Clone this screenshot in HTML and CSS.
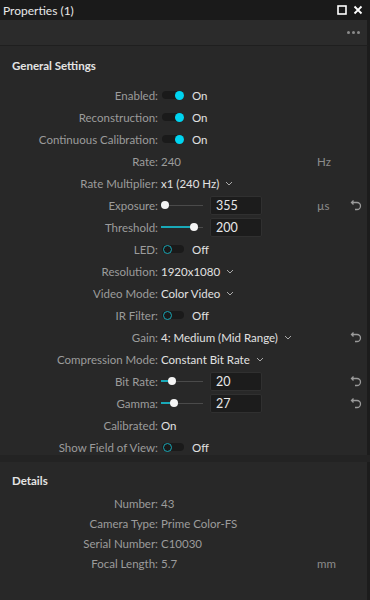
FILE: index.html
```html
<!DOCTYPE html>
<html>
<head>
<meta charset="utf-8">
<link rel="stylesheet" href="styles.css">
</head>
<body>
<div class="panel">
  <div class="titlebar">
    <span class="title">Properties (1)</span>
    <span class="win-icons">
      <svg width="10" height="10" viewBox="0 0 10 10"><rect x="1" y="1" width="8" height="8" fill="none" stroke="#fff" stroke-width="1.6"/></svg>
      <svg width="10" height="10" viewBox="0 0 10 10"><path d="M1.5 1.5L8.5 8.5M8.5 1.5L1.5 8.5" stroke="#fff" stroke-width="1.8"/></svg>
    </span>
  </div>
  <div class="toolbar">
    <span class="dots"><i></i><i></i><i></i></span>
  </div>

  <section class="section general">
    <h2>General Settings</h2>
    <div class="rows">
      <div class="row"><span class="lbl">Enabled:</span><span class="val"><span class="tog on"><b></b></span><span class="tv">On</span></span></div>
      <div class="row"><span class="lbl">Reconstruction:</span><span class="val"><span class="tog on"><b></b></span><span class="tv">On</span></span></div>
      <div class="row"><span class="lbl">Continuous Calibration:</span><span class="val"><span class="tog on"><b></b></span><span class="tv">On</span></span></div>
      <div class="row"><span class="lbl">Rate:</span><span class="val dim">240</span><span class="unit">Hz</span></div>
      <div class="row"><span class="lbl">Rate Multiplier:</span><span class="val">x1 (240 Hz)<svg class="chev" viewBox="0 0 8 5"><path d="M1 1l3 3 3-3" fill="none" stroke="#aaa" stroke-width="1"/></svg></span></div>
      <div class="row"><span class="lbl">Exposure:</span><span class="val"><span class="slider"><span class="fill" style="width:2px"></span><b style="left:0px"></b></span><span class="inp">355</span></span><span class="unit">µs</span><svg class="undo" viewBox="0 0 12 12"><path d="M3.5 1.5L1.5 3.5L3.5 5.5M1.5 3.5H7a3.5 3.5 0 0 1 0 7H5" fill="none" stroke="#9a9a9a" stroke-width="1.3"/></svg></div>
      <div class="row"><span class="lbl">Threshold:</span><span class="val"><span class="slider"><span class="fill" style="width:33px"></span><b style="left:29px"></b></span><span class="inp">200</span></span></div>
      <div class="row"><span class="lbl">LED:</span><span class="val"><span class="tog off"><b></b></span><span class="tv">Off</span></span></div>
      <div class="row"><span class="lbl">Resolution:</span><span class="val">1920x1080<svg class="chev" viewBox="0 0 8 5"><path d="M1 1l3 3 3-3" fill="none" stroke="#aaa" stroke-width="1"/></svg></span></div>
      <div class="row"><span class="lbl">Video Mode:</span><span class="val">Color Video<svg class="chev" viewBox="0 0 8 5"><path d="M1 1l3 3 3-3" fill="none" stroke="#aaa" stroke-width="1"/></svg></span></div>
      <div class="row"><span class="lbl">IR Filter:</span><span class="val"><span class="tog off"><b></b></span><span class="tv">Off</span></span></div>
      <div class="row"><span class="lbl">Gain:</span><span class="val">4: Medium (Mid Range)<svg class="chev" viewBox="0 0 8 5"><path d="M1 1l3 3 3-3" fill="none" stroke="#aaa" stroke-width="1"/></svg></span><span class="unit"></span><svg class="undo" viewBox="0 0 12 12"><path d="M3.5 1.5L1.5 3.5L3.5 5.5M1.5 3.5H7a3.5 3.5 0 0 1 0 7H5" fill="none" stroke="#9a9a9a" stroke-width="1.3"/></svg></div>
      <div class="row"><span class="lbl">Compression Mode:</span><span class="val">Constant Bit Rate<svg class="chev" viewBox="0 0 8 5"><path d="M1 1l3 3 3-3" fill="none" stroke="#aaa" stroke-width="1"/></svg></span></div>
      <div class="row"><span class="lbl">Bit Rate:</span><span class="val"><span class="slider"><span class="fill" style="width:9px"></span><b style="left:7px"></b></span><span class="inp">20</span></span><span class="unit"></span><svg class="undo" viewBox="0 0 12 12"><path d="M3.5 1.5L1.5 3.5L3.5 5.5M1.5 3.5H7a3.5 3.5 0 0 1 0 7H5" fill="none" stroke="#9a9a9a" stroke-width="1.3"/></svg></div>
      <div class="row"><span class="lbl">Gamma:</span><span class="val"><span class="slider"><span class="fill" style="width:11px"></span><b style="left:9px"></b></span><span class="inp">27</span></span><span class="unit"></span><svg class="undo" viewBox="0 0 12 12"><path d="M3.5 1.5L1.5 3.5L3.5 5.5M1.5 3.5H7a3.5 3.5 0 0 1 0 7H5" fill="none" stroke="#9a9a9a" stroke-width="1.3"/></svg></div>
      <div class="row"><span class="lbl">Calibrated:</span><span class="val">On</span></div>
      <div class="row"><span class="lbl">Show Field of View:</span><span class="val"><span class="tog off"><b></b></span><span class="tv">Off</span></span></div>
    </div>
  </section>

  <section class="section details">
    <h2>Details</h2>
    <div class="rows">
      <div class="row"><span class="lbl">Number:</span><span class="val dim">43</span></div>
      <div class="row"><span class="lbl">Camera Type:</span><span class="val dim">Prime Color-FS</span></div>
      <div class="row"><span class="lbl">Serial Number:</span><span class="val dim">C10030</span></div>
      <div class="row"><span class="lbl">Focal Length:</span><span class="val dim">5.7</span><span class="unit">mm</span></div>
    </div>
  </section>
</div>
</body>
</html>
```

FILE: styles.css
```css
* { box-sizing: border-box; margin: 0; padding: 0; }
html, body { background: #222222; }
body {
  margin: 0;
  font-family: Lato, "Open Sans", "Liberation Sans", sans-serif;
  font-size: 11.5px;
  color: #9c9c9c;
  width: 370px;
  height: 600px;
  overflow: hidden;
}
.panel {
  width: 370px;
  height: 600px;
  display: flex;
  flex-direction: column;
  background: #232323;
}
.titlebar {
  height: 20px;
  background: #1a1a1a;
  display: flex;
  align-items: center;
  justify-content: space-between;
  padding: 0 7px 0 3px;
}
.title { color: #e8e8e8; font-size: 12px; }
.win-icons { display: flex; gap: 6px; align-items: center; }
.win-icons svg { width: 10px; height: 10px; display: block; }
.toolbar {
  height: 26px;
  background: #2b2b2b;
  border-bottom: 1px solid #1f1f1f;
  border-right: 3px solid #1c1c1c;
  display: flex;
  align-items: center;
  justify-content: flex-end;
  padding-right: 7px;
}
.dots { display: flex; gap: 2px; }
.dots i { width: 3px; height: 3px; border-radius: 50%; background: #8a8a8a; display: block; }
.section { background: #282828; border-right: 3px solid #1c1c1c; }
.general { height: 409px; padding-top: 12px; }
.details { margin-top: 7px; flex: 1; padding-top: 11px; }
h2 {
  font-size: 11.5px;
  font-weight: bold;
  color: #e4e4e4;
  padding-left: 12px;
  line-height: 16px;
  height: 16px;
}
.general .rows { margin-top: 10px; }
.details .rows { margin-top: 4px; }
.row {
  display: grid;
  grid-template-columns: 158px 153px 33px 14px;
  column-gap: 3px;
  align-items: center;
  height: 22px;
}
.details .row { height: 20px; }
.lbl { text-align: right; white-space: nowrap; color: #9c9c9c; }
.val { color: #e2e2e2; display: flex; align-items: center; white-space: nowrap; }
.val.dim { color: #9c9c9c; }
.unit { color: #8c8c8c; padding-left: 0; }
.chev { width: 8px; height: 5px; margin-left: 6px; }
.undo { width: 12px; height: 12px; margin-left: -3px; }
.tog {
  position: relative;
  width: 22px;
  height: 8px;
  border-radius: 4px;
  background: #1a1a1a;
  margin-right: 7px;
  margin-left: 1px;
}
.tog b {
  position: absolute;
  top: 50%;
  width: 9px;
  height: 9px;
  margin-top: -4.5px;
  border-radius: 50%;
}
.tog.on b { right: 0; background: #00d4f0; }
.tog.off b { left: 1px; border: 1.5px solid #1aa6b4; background: #1a1a1a; }
.tv { color: #e2e2e2; margin-left: 1px; }
.slider {
  position: relative;
  width: 42px;
  height: 8px;
  margin-right: 7px;
}
.slider::before {
  content: "";
  position: absolute;
  left: 0; right: 0; top: 3.5px;
  height: 1px;
  background: #4a4a4a;
}
.slider .fill {
  position: absolute;
  left: 0; top: 3px;
  height: 1.5px;
  background: #19a9b8;
}
.slider b {
  position: absolute;
  top: 0;
  width: 8px; height: 8px;
  border-radius: 50%;
  background: #f4f4f4;
}
.inp {
  width: 52px;
  height: 19px;
  background: #1c1c1c;
  border: 1px solid #303030;
  border-radius: 2px;
  color: #e8e8e8;
  padding-left: 5px;
  line-height: 17px;
  font-size: 12.5px;
}
```
